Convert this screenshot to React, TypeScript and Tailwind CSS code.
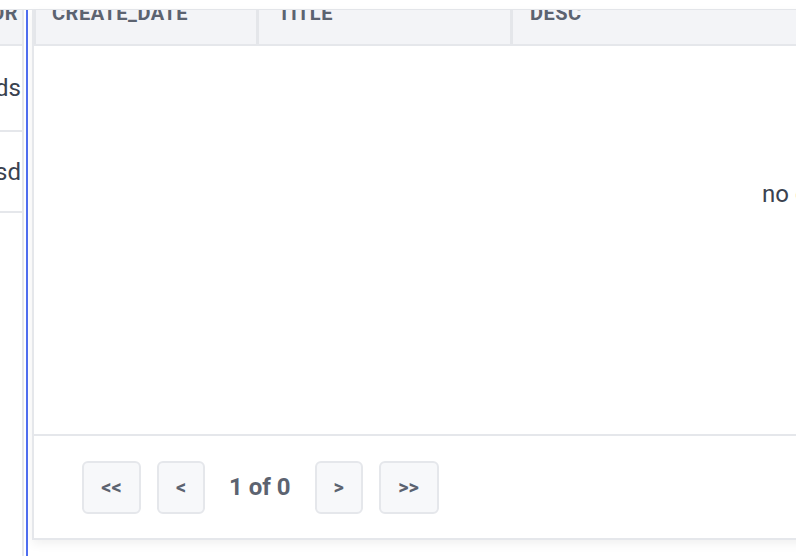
import React from "react";

const columns = [
  { label: "CREATE_DATE", className: "w-[222px] border-l-2 pl-4" },
  { label: "TITLE", className: "w-[254px] border-l-[3px] pl-[19px]" },
  { label: "DESC", className: "flex-1 border-l-[3px] pl-[17px]" },
];

function PageButton({ label, width }: { label: string; width: string }) {
  return (
    <button
      className={`flex h-[53px] items-center justify-center rounded-md border-2 border-[#e5e7eb] bg-[#f7f8fa] text-xl font-bold text-[#5c6370] ${width}`}
    >
      {label}
    </button>
  );
}

export default function App() {
  return (
    <div className="h-[556px] w-[796px] overflow-hidden bg-white font-['Roboto',sans-serif]">
      <div className="h-[9px]" />
      <div className="h-px bg-[#e5e7eb]" />
      <div className="flex h-[546px]">
        {/* left table, scrolled out of view */}
        <div className="w-[24px] shrink-0 overflow-hidden border-r-2 border-[#e5e7eb]">
          <div className="h-[36px] overflow-hidden border-b-2 border-[#e5e7eb] bg-[#f3f4f7]">
            <div className="-mt-[11px] flex justify-end pr-[4px] text-xl leading-7 font-bold tracking-wide whitespace-nowrap text-[#5c6370]">
              AUTHOR
            </div>
          </div>
          <div className="flex h-[86px] items-center justify-end border-b-2 border-[#e5e7eb] pr-[1px] text-2xl whitespace-nowrap text-[#3a424f]">
            ds
          </div>
          <div className="flex h-[81px] items-center justify-end border-b-2 border-[#e5e7eb] pr-[1px] text-2xl whitespace-nowrap text-[#3a424f]">
            sd
          </div>
        </div>
        <div className="w-[2px] shrink-0" />
        <div className="w-[2px] shrink-0 bg-[#4f6ef0]" />
        <div className="w-[4px] shrink-0" />

        {/* main table card */}
        <div className="flex h-[530px] w-[1000px] shrink-0 flex-col border-x-2 border-b-2 border-[#e5e7eb] bg-white shadow-[0_4px_10px_rgba(0,0,0,0.06)]">
          <div className="flex h-[36px] shrink-0 border-b-2 border-[#e5e7eb] bg-[#f3f4f7]">
            {columns.map((col) => (
              <div
                key={col.label}
                className={`h-[34px] overflow-hidden border-[#e4e6ea] ${col.className}`}
              >
                <div className="-mt-[11px] text-xl leading-7 font-bold tracking-wide whitespace-nowrap text-[#5c6370]">
                  {col.label}
                </div>
              </div>
            ))}
          </div>
          <div className="h-[388px] shrink-0 pt-[132px] pl-[728px]">
            <div className="text-2xl leading-8 whitespace-nowrap text-[#3a424f]">
              no data
            </div>
          </div>
          <div className="flex flex-1 items-center gap-4 border-t-2 border-[#e5e7eb] pl-[48px]">
            <PageButton label="<<" width="w-[59px]" />
            <PageButton label="<" width="w-[48px]" />
            <span className="mx-2 text-2xl font-bold text-[#5c6370]">
              1 of 0
            </span>
            <PageButton label=">" width="w-[48px]" />
            <PageButton label=">>" width="w-[60px]" />
          </div>
        </div>
      </div>
    </div>
  );
}
